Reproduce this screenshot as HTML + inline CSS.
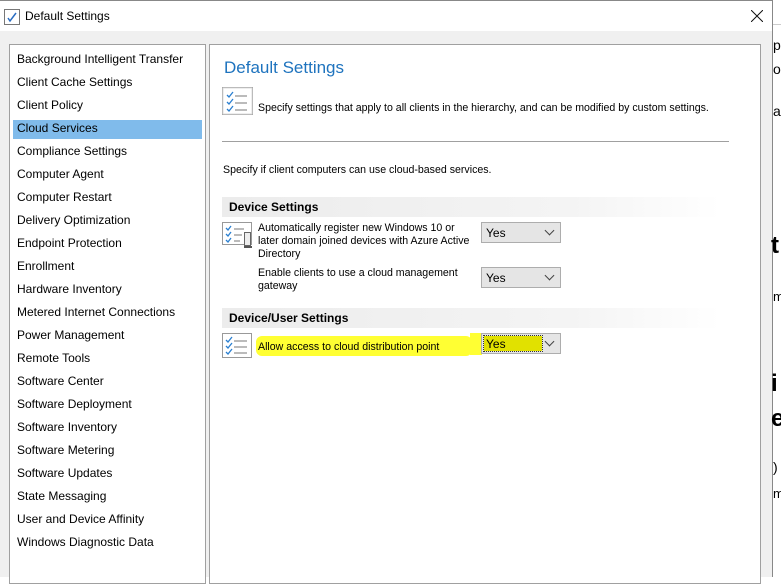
<!DOCTYPE html>
<html><head><style>
*{margin:0;padding:0;box-sizing:border-box}
body{width:781px;height:577px;overflow:hidden;background:#fff;font-family:"Liberation Sans",sans-serif;font-size:12px;color:#000;position:relative}
.a{position:absolute;white-space:nowrap}
.dlg{position:absolute;left:0;top:0;width:773px;height:577px;background:#f0f0f0;border-right:1px solid #888;border-top:1px solid #888}
.tb{position:absolute;left:0;top:0;width:772px;height:30px;background:#fff}
.lp{position:absolute;left:9px;top:43px;width:197px;height:540px;background:#fff;border:1px solid #a0a0a0}
.rp{position:absolute;left:209px;top:43px;width:552px;height:540px;background:#fff;border:1px solid #a0a0a0}
.li{position:absolute;left:7px;font-size:12px}
.hdr{position:absolute;left:222px;width:498px;height:20px;background:linear-gradient(to right,#ececec,#f4f4f4 70%,#fff);font-weight:bold;font-size:12px;padding:3px 0 0 7px}
.cb{position:absolute;left:481px;width:80px;height:21px;background:#e5e5e5;border:1px solid #adadad;padding:3px 0 0 4px}
.cb i{position:absolute;right:7px;top:4px;width:7px;height:7px;border-right:1px solid #444;border-bottom:1px solid #444;transform:rotate(45deg)}
.ic{position:absolute}
.t{font-size:10.6px;line-height:13px}
</style></head><body>
<div class="dlg">
<div class="tb">
<svg class="ic" style="left:4px;top:8px" width="16" height="16"><rect x=".5" y=".5" width="15" height="15" fill="#fff" stroke="#777"/><path d="M4 9l2 3 6-8" stroke="#2a6dc2" stroke-width="1.5" fill="none"/></svg>
<div class="a" style="left:25px;top:8px;font-size:12px">Default Settings</div>
<svg class="ic" style="left:751px;top:9px" width="12" height="12"><path d="M0 0L12 12M12 0L0 12" stroke="#111" stroke-width="1"/></svg>
</div>
<div class="lp">
<div class="a" style="left:3px;top:75px;width:189px;height:19px;background:#80bbeb"></div>
<div class="li a" style="top:7px">Background Intelligent Transfer</div>
<div class="li a" style="top:30px">Client Cache Settings</div>
<div class="li a" style="top:53px">Client Policy</div>
<div class="li a" style="top:76px">Cloud Services</div>
<div class="li a" style="top:99px">Compliance Settings</div>
<div class="li a" style="top:122px">Computer Agent</div>
<div class="li a" style="top:145px">Computer Restart</div>
<div class="li a" style="top:168px">Delivery Optimization</div>
<div class="li a" style="top:191px">Endpoint Protection</div>
<div class="li a" style="top:214px">Enrollment</div>
<div class="li a" style="top:237px">Hardware Inventory</div>
<div class="li a" style="top:260px">Metered Internet Connections</div>
<div class="li a" style="top:283px">Power Management</div>
<div class="li a" style="top:306px">Remote Tools</div>
<div class="li a" style="top:329px">Software Center</div>
<div class="li a" style="top:352px">Software Deployment</div>
<div class="li a" style="top:375px">Software Inventory</div>
<div class="li a" style="top:398px">Software Metering</div>
<div class="li a" style="top:421px">Software Updates</div>
<div class="li a" style="top:444px">State Messaging</div>
<div class="li a" style="top:467px">User and Device Affinity</div>
<div class="li a" style="top:490px">Windows Diagnostic Data</div>
</div>
<div class="rp"></div>
</div>
<div class="a" style="left:224px;top:58px;font-size:17px;color:#1e73be">Default Settings</div>
<svg class="ic" style="left:222px;top:87px" width="32" height="29"><rect x=".5" y=".5" width="30" height="27" fill="#fff" stroke="#999"/><rect x="1" y="1" width="29" height="26" fill="none" stroke="#ddd"/><path d="M5 8l2 2 4-5M5 15l2 2 4-5M5 22l2 2 4-5" stroke="#2a7fd0" stroke-width="1.3" fill="none"/><path d="M13 9h12M13 16h12M13 23h12" stroke="#777"/></svg>
<div class="a t" style="left:258px;top:102px">Specify settings that apply to all clients in the hierarchy, and can be modified by custom settings.</div>
<div class="a" style="left:222px;top:141px;width:507px;height:1px;background:#a0a0a0"></div>
<div class="a t" style="left:223px;top:164px">Specify if client computers can use cloud-based services.</div>
<div class="hdr" style="top:197px">Device Settings</div>
<svg class="ic" style="left:222px;top:222px" width="32" height="29"><rect x=".5" y=".5" width="29" height="22" fill="#fff" stroke="#999"/><path d="M4 6l2 2 3-4M4 12l2 2 3-4M4 18l2 2 3-4" stroke="#2a7fd0" stroke-width="1.3" fill="none"/><path d="M12 7h10M12 13h8M12 19h6" stroke="#777"/><rect x="22.5" y="10.5" width="6" height="13" fill="#eee" stroke="#666"/><path d="M22 25h8" stroke="#555" stroke-width="2"/></svg>
<div class="a t" style="left:258px;top:222px">Automatically register new Windows 10 or<br>later domain joined devices with Azure Active<br>Directory</div>
<div class="cb" style="top:222px">Yes<i></i></div>
<div class="a t" style="left:258px;top:267px">Enable clients to use a cloud management<br>gateway</div>
<div class="cb" style="top:267px">Yes<i></i></div>
<div class="hdr" style="top:308px">Device/User Settings</div>
<div class="a" style="left:256px;top:336px;width:216px;height:20px;background:#ffff33;border-radius:6px"></div>
<div class="a" style="left:470px;top:333px;width:12px;height:22px;background:#ffff33"></div>
<svg class="ic" style="left:222px;top:333px" width="32" height="26"><rect x=".5" y=".5" width="29" height="24" fill="#fff" stroke="#999"/><path d="M4 7l2 2 4-5M4 13l2 2 4-5M4 19l2 2 4-5" stroke="#2a7fd0" stroke-width="1.3" fill="none"/><path d="M12 8h13M12 14h13M12 20h13" stroke="#777"/></svg>
<div class="a t" style="left:258px;top:341px">Allow access to cloud distribution point</div>
<div class="cb" style="top:333px;background:#e5e5e5"><span class="a" style="left:2px;top:2px;width:58px;height:15px;background:#e1e100;outline:1px dotted #333"></span><span style="position:relative">Yes</span><i></i></div>
<div class="a" style="left:773px;top:24px;width:8px;height:1px;background:#ccc"></div>
<div class="a" style="left:773px;top:37px;font-size:14px">p</div>
<div class="a" style="left:773px;top:61px;font-size:14px">o</div>
<div class="a" style="left:773px;top:103px;font-size:14px">ar</div>
<div class="a" style="left:771px;top:232px;font-size:24px;font-weight:bold">t</div>
<div class="a" style="left:773px;top:289px;font-size:13px">m</div>
<div class="a" style="left:771px;top:370px;font-size:24px;font-weight:bold">i</div>
<div class="a" style="left:771px;top:405px;font-size:24px;font-weight:bold">e</div>
<div class="a" style="left:773px;top:459px;font-size:14px">)</div>
<div class="a" style="left:773px;top:486px;font-size:13px">m</div>
</body></html>
